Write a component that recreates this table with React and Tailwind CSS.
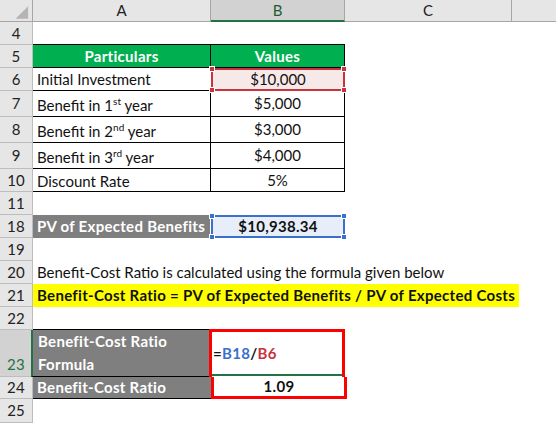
import React from 'react';

// sheet geometry: row header 33px, A 178px, B 134px, C 167px
const rowNum = (sel) =>
  sel
    ? 'w-[33px] shrink-0 flex items-end justify-center pb-[1px] bg-[#d2d2d2] text-[#217346] border-r border-b border-[#bdbdbd]'
    : 'w-[33px] shrink-0 flex items-center justify-center bg-[#e6e6e6] text-[#222] border-r border-b border-[#bdbdbd]';

const Sq = ({ pos, color }) => (
  <span className={`absolute w-[6px] h-[6px] border border-white ${color} ${pos}`} />
);

const Corners = ({ color }) => (
  <>
    <Sq color={color} pos="-left-[4px] -top-[4px]" />
    <Sq color={color} pos="-right-[4px] -top-[4px]" />
    <Sq color={color} pos="-left-[4px] -bottom-[4px]" />
    <Sq color={color} pos="-right-[4px] -bottom-[4px]" />
  </>
);

const Ord = ({ n, sup }) => (
  <>
    Benefit in {n}
    <span className="text-[10px] relative -top-[6px]">{sup}</span> year
  </>
);

const tableRows = [
  { n: 7, a: <Ord n="1" sup="st" />, b: '$5,000', h: 'h-[26px]' },
  { n: 8, a: <Ord n="2" sup="nd" />, b: '$3,000', h: 'h-[26px]' },
  { n: 9, a: <Ord n="3" sup="rd" />, b: '$4,000', h: 'h-[26px]' },
  { n: 10, a: 'Discount Rate', b: '5%', h: 'h-[23px]' },
];

export default function App() {
  return (
    <div
      className="w-[556px] h-[423px] overflow-hidden bg-white text-[15px] text-[#111]"
      style={{ fontFamily: 'Lato, "Open Sans", sans-serif' }}
    >
      {/* column headers */}
      <div className="flex h-[22px] bg-[#e6e6e6] text-[15px] text-[#222]">
        <div className="w-[33px] shrink-0 border-r border-b border-[#a6a6a6] flex items-center justify-center">
          <svg width="33" height="22" viewBox="0 0 33 22">
            <polygon points="29,6 29,19 16,19" fill="#b4b4b4" />
          </svg>
        </div>
        <div className="w-[178px] shrink-0 border-r border-b border-[#a6a6a6] flex items-center justify-center">A</div>
        <div className="w-[134px] shrink-0 border-r border-b-2 border-r-[#a6a6a6] border-b-[#217346] bg-[#d2d2d2] text-[#1e5c36] flex items-center justify-center">B</div>
        <div className="w-[167px] shrink-0 border-r border-b border-[#a6a6a6] flex items-center justify-center">C</div>
        <div className="flex-1 border-b border-[#a6a6a6]" />
      </div>

      {/* row 4 */}
      <div className="flex h-[23px]">
        <div className={rowNum(false)}>4</div>
        <div className="w-[178px] shrink-0 border-b border-black" />
        <div className="w-[134px] shrink-0 border-b border-black" />
      </div>

      {/* row 5 header */}
      <div className="flex h-[23px] tracking-[0.3px]">
        <div className={rowNum(false)}>5</div>
        <div className="w-[178px] shrink-0 bg-[#00b050] text-white font-bold border-r border-b border-black flex items-center justify-center">Particulars</div>
        <div className="w-[134px] shrink-0 bg-[#00b050] text-white font-bold border-r border-b border-black flex items-center justify-center">Values</div>
      </div>

      {/* row 6 */}
      <div className="flex h-[23px]">
        <div className={rowNum(false)}>6</div>
        <div className="w-[178px] shrink-0 border-b border-black flex items-center pl-[4px]">Initial Investment</div>
        <div className="relative w-[134px] shrink-0 bg-[#f8e9e9] border-2 border-[#c8343e] flex items-center justify-center">
          $10,000
          <Corners color="bg-[#c8343e]" />
        </div>
      </div>

      {tableRows.map((r) => (
        <div key={r.n} className={`flex ${r.h}`}>
          <div className={rowNum(false)}>{r.n}</div>
          <div className="w-[178px] shrink-0 border-r border-b border-black flex items-center pl-[4px] pt-[3px]">
            <span>{r.a}</span>
          </div>
          <div className="w-[134px] shrink-0 border-r border-b border-black flex items-center justify-center">{r.b}</div>
        </div>
      ))}

      {/* row 11 */}
      <div className="flex h-[23px]">
        <div className={rowNum(false)}>11</div>
      </div>

      {/* row 18 */}
      <div className="flex h-[23px] tracking-[0.3px]">
        <div className={rowNum(false)}>18</div>
        <div className="w-[177px] shrink-0 bg-[#7f7f7f] text-white font-bold flex items-center pl-[4px]">PV of Expected Benefits</div>
        <div className="relative ml-[1px] w-[134px] shrink-0 bg-[#e7eef9] border-2 border-[#3a70cc] flex items-center justify-center font-bold">
          $10,938.34
          <Corners color="bg-[#3a70cc]" />
        </div>
      </div>

      {/* row 19 */}
      <div className="flex h-[23px]">
        <div className={rowNum(false)}>19</div>
      </div>

      {/* row 20 */}
      <div className="flex h-[23px]">
        <div className={rowNum(false)}>20</div>
        <div className="flex items-center pl-[4px] whitespace-nowrap">
          Benefit-Cost Ratio is calculated using the formula given below
        </div>
      </div>

      {/* row 21 */}
      <div className="flex h-[23px]">
        <div className={rowNum(false)}>21</div>
        <div className="w-[486px] shrink-0 bg-[#ffff00] font-bold tracking-[0.3px] flex items-center pl-[4px] whitespace-nowrap">
          Benefit-Cost Ratio = PV of Expected Benefits / PV of Expected Costs
        </div>
      </div>

      {/* row 22 */}
      <div className="flex h-[23px]">
        <div className={rowNum(false)}>22</div>
        <div className="w-[178px] shrink-0 border-b border-black" />
      </div>

      {/* row 23 */}
      <div className="flex h-[47px] tracking-[0.3px]">
        <div className={rowNum(true)}>23</div>
        <div className="w-[178px] shrink-0 bg-[#7f7f7f] text-white font-bold border-l-2 border-b border-l-[#217346] border-b-black -ml-[2px] pl-[5px] leading-[23px] pt-[0px]">
          Benefit-Cost Ratio
          <br />
          Formula
        </div>
        <div className="w-[136px] -mr-[2px] shrink-0 border-x-[3px] border-t-[3px] border-[#ff0000] -mt-[1px]">
          <div className="h-[44px] border-b-2 border-[#217346] flex items-center font-bold pl-[1px]">
            =<span className="text-[#3a70cc]">B18</span>/<span className="text-[#c8343e]">B6</span>
          </div>
        </div>
      </div>

      {/* row 24 */}
      <div className="flex h-[22px] tracking-[0.3px]">
        <div className={rowNum(false)}>24</div>
        <div className="w-[178px] shrink-0 bg-[#7f7f7f] text-white font-bold border-b border-black flex items-center pl-[4px]">Benefit-Cost Ratio</div>
        <div className="w-[136px] shrink-0 border-x-[3px] border-b-[3px] border-[#ff0000] flex items-center justify-center font-bold">1.09</div>
      </div>

      {/* row 25 */}
      <div className="flex h-[24px]">
        <div className={rowNum(false)}>25</div>
      </div>
    </div>
  );
}
